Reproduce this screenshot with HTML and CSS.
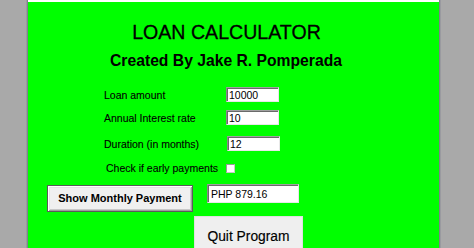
FILE: index.html
```html
<!DOCTYPE html>
<html>
<head>
<meta charset="utf-8">
<link rel="stylesheet" href="styles.css">
</head>
<body>
<div class="panel">
  <h1 class="title">LOAN CALCULATOR</h1>
  <h2 class="subtitle">Created By Jake R. Pomperada</h2>
  <div class="form">
    <div class="row row1">
      <span class="label">Loan amount</span>
      <input class="field" type="text" value="10000">
    </div>
    <div class="row row2">
      <span class="label">Annual Interest rate</span>
      <input class="field" type="text" value="10">
    </div>
    <div class="row row3">
      <span class="label">Duration (in months)</span>
      <input class="field" type="text" value="12">
    </div>
    <div class="row row4">
      <span class="label label-check">Check if early payments</span>
      <input class="check" type="checkbox">
    </div>
  </div>
  <div class="actions">
    <button class="btn btn-default">Show Monthly Payment</button>
    <input class="field result" type="text" value="PHP 879.16">
  </div>
  <button class="btn btn-quit">Quit Program</button>
</div>
</body>
</html>
```

FILE: styles.css
```css
html, body {
  margin: 0;
  padding: 0;
}
body {
  width: 474px;
  height: 248px;
  overflow: hidden;
  background: #a9a9a9;
  font-family: "Liberation Sans", Arial, sans-serif;
  color: #000;
}
.panel {
  margin-left: 28px;
  width: 411px;
  height: 248px;
  box-sizing: border-box;
  background: #00ff00;
  border-top: 2px solid #ffffff;
  box-shadow: -1px 0 0 #80808c, 1px 0 0 #80808c, -2px 0 0 #9a9aa0, 2px 0 0 #9a9aa0;
  padding-top: 20px;
}
.title {
  margin: 0;
  font-size: 19.6px;
  line-height: 20px;
  font-weight: normal;
  text-align: center;
  padding-right: 14px;
  -webkit-text-stroke: 0.3px #000;
}
.subtitle {
  margin: 10px 0 0 0;
  font-size: 15.7px;
  line-height: 18px;
  font-weight: bold;
  text-align: center;
  padding-right: 15px;
}
.form {
  padding-left: 76px;
  margin-top: 17px;
}
.row {
  display: flex;
  align-items: center;
  height: 15px;
}
.row2 { margin-top: 8px; }
.row3 { margin-top: 11px; }
.row4 { margin-top: 12px; height: 10px; }
.label {
  width: 122px;
  font-size: 10.5px;
  line-height: 12px;
  white-space: nowrap;
  -webkit-text-stroke: 0.1px #000;
}
.label-check { padding-left: 2px; width: 120px; }
.field {
  box-sizing: border-box;
  width: 53px;
  height: 15px;
  margin: 0;
  padding: 0 0 0 2px;
  border: 1px solid;
  border-color: #a0a0a0 #e8e8e8 #e8e8e8 #8a8a8a;
  box-shadow: inset 1px 1px 0 #6a6a6a;
  background: #ffffff;
  font-family: "Liberation Sans", Arial, sans-serif;
  font-size: 10.5px;
  line-height: 13px;
  color: #000;
  outline: none;
}
.row3 .field { margin-left: 1px; }
.check {
  -webkit-appearance: none;
  appearance: none;
  box-sizing: border-box;
  width: 9px;
  height: 9px;
  margin: 0;
  background: #ffffff;
  border: 1px solid #c8c8c8;
  border-top-color: #9a9a9a;
  border-left-color: #9a9a9a;
}
.actions {
  display: flex;
  align-items: flex-start;
  margin-top: 12px;
  padding-left: 19px;
}
.btn {
  font-family: "Liberation Sans", Arial, sans-serif;
  color: #000;
  background: #f0f0f0;
  margin: 0;
  padding: 0;
  cursor: default;
}
.btn-default {
  width: 146px;
  height: 27px;
  border: 1px solid #5a5a5a;
  box-shadow: inset 1px 1px 0 #ffffff, inset -1px -1px 0 #9c9c9c, inset 2px 2px 0 #e4e4e4, inset -2px -2px 0 #c8c8c8;
  font-size: 11px;
  font-weight: bold;
  line-height: 25px;
}
.result {
  width: 92px;
  height: 19px;
  margin-left: 14px;
  margin-top: -1px;
  padding-left: 3px;
  line-height: 17px;
}
.btn-quit {
  display: block;
  margin-left: 166px;
  margin-top: 4px;
  width: 109px;
  border: 1px solid #e0e0e0;
  background: #efefef;
  font-size: 13.8px;
  line-height: 16px;
  padding: 12px 0 8px;
  text-align: center;
  -webkit-text-stroke: 0.15px #000;
}
```
